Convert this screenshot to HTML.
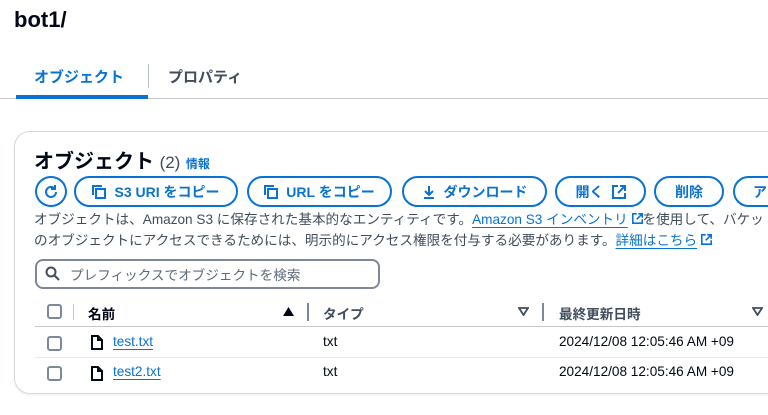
<!DOCTYPE html><html><head><meta charset="utf-8"><style>
*{box-sizing:border-box;margin:0;padding:0}
body{width:768px;height:415px;overflow:hidden;background:#fff;font-family:"Liberation Sans","Noto Sans CJK JP",sans-serif;color:#000716;position:relative}
.a{position:absolute;white-space:nowrap}
.btn{position:absolute;top:176px;height:31px;border:2px solid #0972d3;border-radius:16px;color:#0972d3;font-weight:bold;font-size:14px;display:flex;align-items:center;justify-content:center;gap:8px}
.lnk{color:#0972d3;text-decoration:underline;text-underline-offset:3px}
.cb{position:absolute;width:15px;height:15px;border:2px solid #7d8998;border-radius:3px}
</style></head><body>
<div class="a" style="left:14px;top:7px;font-size:22px;font-weight:bold">bot1/</div>
<div class="a" style="left:34px;top:66px;font-size:15px;font-weight:bold;color:#0972d3">オブジェクト</div>
<div class="a" style="left:148px;top:64px;width:1px;height:24px;background:#b6bec9"></div>
<div class="a" style="left:168px;top:66px;font-size:15px;font-weight:bold;color:#414d5c">プロパティ</div>
<div class="a" style="left:0;top:98px;width:768px;height:1px;background:#c6c6cd"></div>
<div class="a" style="left:16px;top:95px;width:132px;height:4px;background:#0972d3"></div>
<div class="a" style="left:14px;top:131px;width:780px;height:263px;border:1px solid #d5dbdb;border-radius:16px;box-shadow:0 1px 2px rgba(0,0,0,.08)"></div>
<div class="a" style="left:34px;top:145px;font-size:20px;font-weight:bold">オブジェクト <span style="font-weight:normal;color:#414d5c;font-size:17px">(2)</span> <span style="font-size:12px;color:#0972d3">情報</span></div>
<div class="btn" style="left:35px;width:32px;border-radius:50%"><svg width="16" height="16" viewBox="0 0 16 16" fill="none" stroke="#0972d3" stroke-width="2"><path d="M13 8a5 5 0 1 1-1.5-3.6"/><path d="M12 1v4H8"/></svg></div>
<div class="btn" style="left:74px;width:164px"><svg width="14" height="14" viewBox="0 0 14 14" fill="none" stroke="#0972d3" stroke-width="2"><path d="M1 10V1h9"/><rect x="4" y="4" width="9" height="9"/></svg>S3 URI をコピー</div>
<div class="btn" style="left:247px;width:145px"><svg width="14" height="14" viewBox="0 0 14 14" fill="none" stroke="#0972d3" stroke-width="2"><path d="M1 10V1h9"/><rect x="4" y="4" width="9" height="9"/></svg>URL をコピー</div>
<div class="btn" style="left:402px;width:145px"><svg width="14" height="14" viewBox="0 0 14 14" fill="none" stroke="#0972d3" stroke-width="2"><path d="M7 1v8M3 6l4 4 4-4M2 13h10"/></svg>ダウンロード</div>
<div class="btn" style="left:555px;width:91px">開く <svg width="14" height="14" viewBox="0 0 14 14" fill="none" stroke="#0972d3" stroke-width="2"><path d="M6 1H1v12h12V8M8 1h5v5M13 1L6 8"/></svg></div>
<div class="btn" style="left:654px;width:70px">削除</div>
<div class="btn" style="left:733px;width:80px;justify-content:flex-start;padding-left:18px">ア</div>
<div class="a" style="left:34px;top:209px;font-size:13.6px;color:#414d5c;line-height:21px">オブジェクトは、Amazon S3 に保存された基本的なエンティティです。<span class="lnk">Amazon S3 インベントリ</span> <svg width="11" height="11" viewBox="0 0 14 14" fill="none" stroke="#0972d3" stroke-width="2"><path d="M6 1H1v12h12V8M8 1h5v5M13 1L6 8"/></svg>を使用して、バケットの<br>のオブジェクトにアクセスできるためには、明示的にアクセス権限を付与する必要があります。<span class="lnk">詳細はこちら</span> <svg width="11" height="11" viewBox="0 0 14 14" fill="none" stroke="#0972d3" stroke-width="2"><path d="M6 1H1v12h12V8M8 1h5v5M13 1L6 8"/></svg></div>
<div class="a" style="left:35px;top:259px;width:345px;height:30px;border:2px solid #7d8998;border-radius:8px"></div>
<svg class="a" style="left:45px;top:266px" width="15" height="15" viewBox="0 0 15 15" fill="none" stroke="#414d5c" stroke-width="2"><circle cx="6" cy="6" r="4.5"/><path d="M9.5 9.5L14 14"/></svg>
<div class="a" style="left:70px;top:264px;font-size:13.6px;color:#5f6b7a">プレフィックスでオブジェクトを検索</div>
<div class="cb" style="left:47px;top:304px"></div>
<div class="a" style="left:73px;top:304px;width:1px;height:16px;background:#c6c6cd"></div>
<div class="a" style="left:88px;top:303px;font-size:13.6px;font-weight:bold">名前</div>
<svg class="a" style="left:283px;top:307px" width="11" height="9" viewBox="0 0 11 9"><path d="M5.5 0L11 9H0z" fill="#000716"/></svg>
<div class="a" style="left:307px;top:303px;width:2px;height:18px;background:#7d8998"></div>
<div class="a" style="left:323px;top:303px;font-size:13.6px;font-weight:bold;color:#414d5c">タイプ</div>
<svg class="a" style="left:518px;top:307px" width="11" height="9" viewBox="0 0 11 9"><path d="M1 1h9L5.5 8z" fill="none" stroke="#414d5c" stroke-width="1.8"/></svg>
<div class="a" style="left:542px;top:303px;width:2px;height:18px;background:#7d8998"></div>
<div class="a" style="left:559px;top:303px;font-size:13.6px;font-weight:bold;color:#414d5c">最終更新日時</div>
<svg class="a" style="left:752px;top:307px" width="11" height="9" viewBox="0 0 11 9"><path d="M1 1h9L5.5 8z" fill="none" stroke="#414d5c" stroke-width="1.8"/></svg>
<div class="a" style="left:35px;top:326px;width:740px;height:1px;background:#c6c6cd"></div>
<div class="a" style="left:35px;top:357px;width:740px;height:1px;background:#e9ebed"></div>
<div class="cb" style="left:47px;top:336px"></div>
<div class="cb" style="left:47px;top:366px"></div>
<svg class="a" style="left:91px;top:335px" width="12" height="15" viewBox="0 0 12 15" fill="none" stroke="#000716" stroke-width="2"><path d="M1 1h6l4 4v9H1z"/><path d="M7 1v4h4"/></svg>
<svg class="a" style="left:91px;top:366px" width="12" height="15" viewBox="0 0 12 15" fill="none" stroke="#000716" stroke-width="2"><path d="M1 1h6l4 4v9H1z"/><path d="M7 1v4h4"/></svg>
<div class="a lnk" style="left:113px;top:334px;font-size:13.6px">test.txt</div>
<div class="a lnk" style="left:113px;top:364px;font-size:13.6px">test2.txt</div>
<div class="a" style="left:323px;top:334px;font-size:13.6px">txt</div>
<div class="a" style="left:323px;top:364px;font-size:13.6px">txt</div>
<div class="a" style="left:559px;top:334px;font-size:13.6px">2024/12/08 12:05:46 AM +09</div>
<div class="a" style="left:559px;top:364px;font-size:13.6px">2024/12/08 12:05:46 AM +09</div>
</body></html>
